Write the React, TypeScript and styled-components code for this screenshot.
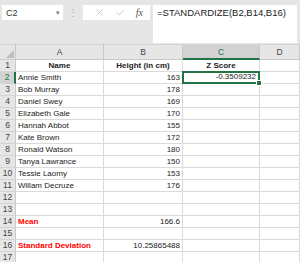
import styled, { createGlobalStyle } from 'styled-components';
import { X, Check } from 'lucide-react';

const GlobalStyle = createGlobalStyle`
  html, body {
    margin: 0;
    padding: 0;
    background: #e6e6e6;
  }
`;

type Row = { name?: string; height?: string; z?: string; red?: boolean; header?: boolean };

const rows: Row[] = [
  { name: 'Name', height: 'Height (in cm)', z: 'Z Score', header: true },
  { name: 'Annie Smith', height: '163', z: '-0.3509232' },
  { name: 'Bob Murray', height: '178' },
  { name: 'Daniel Swey', height: '169' },
  { name: 'Elizabeth Gale', height: '170' },
  { name: 'Hannah Abbot', height: '155' },
  { name: 'Kate Brown', height: '172' },
  { name: 'Ronald Watson', height: '180' },
  { name: 'Tanya Lawrance', height: '150' },
  { name: 'Tessie Laomy', height: '153' },
  { name: 'Willam Decruze', height: '176' },
  {},
  {},
  { name: 'Mean', height: '166.6', red: true },
  {},
  { name: 'Standard Deviation', height: '10.25865488', red: true },
  {},
];

const columns = ['A', 'B', 'C', 'D'];

const App = () => {
  return (
    <Page>
      <GlobalStyle />
      <FormulaBar>
        <NameBox>
          <span>C2</span>
          <Caret>▾</Caret>
        </NameBox>
        <Dots>⋮</Dots>
        <FxGroup>
          <X size={11} strokeWidth={1.2} color="#a9a9a9" />
          <Check size={11} strokeWidth={1.2} color="#a9a9a9" />
          <FxLabel>fx</FxLabel>
        </FxGroup>
        <FormulaInput>=STANDARDIZE(B2,B14,B16)</FormulaInput>
      </FormulaBar>

      <Sheet>
        <Corner>
          <CornerTriangle />
        </Corner>
        {columns.map((c) => (
          <ColumnHeader key={c} $selected={c === 'C'}>
            {c}
          </ColumnHeader>
        ))}

        {rows.map((r, i) => {
          const n = i + 1;
          return [
            <RowHeader key={`h${n}`} $selected={n === 2}>
              {n}
            </RowHeader>,
            <Cell key={`a${n}`} $align={r.header ? 'center' : 'left'} $bold={r.header || r.red} $red={r.red}>
              {r.name}
            </Cell>,
            <Cell key={`b${n}`} $align={r.header ? 'center' : 'right'} $bold={r.header}>
              {r.height}
            </Cell>,
            n === 2 ? (
              <ActiveCell key={`c${n}`}>{r.z}</ActiveCell>
            ) : (
              <Cell key={`c${n}`} $align="center" $bold={r.header}>
                {r.z}
              </Cell>
            ),
            <Cell key={`d${n}`} $align="left" />,
          ];
        })}
      </Sheet>
    </Page>
  );
};

const Page = styled.div`
  width: 300px;
  height: 262px;
  overflow: hidden;
  background: #e6e6e6;
  font-family: 'Liberation Sans', Arial, sans-serif;
`;

const FormulaBar = styled.div`
  display: flex;
  align-items: flex-start;
  height: 44px;
  padding: 5px 3px 0 2px;
  box-sizing: border-box;
`;

const NameBox = styled.div`
  width: 61px;
  height: 15px;
  background: #fff;
  display: flex;
  align-items: center;
  justify-content: space-between;
  padding: 0 3px 0 4px;
  box-sizing: border-box;
  font-size: 9px;
  color: #333;
`;

const Caret = styled.span`
  font-size: 7px;
  color: #777;
`;

const Dots = styled.div`
  width: 20px;
  height: 15px;
  display: flex;
  align-items: center;
  justify-content: center;
  color: #a8a8a8;
  font-size: 10px;
`;

const FxGroup = styled.div`
  width: 67px;
  height: 15px;
  background: #fff;
  display: flex;
  align-items: center;
  justify-content: space-around;
  padding: 0 2px 0 6px;
  box-sizing: border-box;
`;

const FxLabel = styled.span`
  font-family: 'Liberation Serif', 'Times New Roman', serif;
  font-style: italic;
  font-size: 10px;
  color: #555;
`;

const FormulaInput = styled.div`
  flex: 1;
  margin-left: 3px;
  height: 38px;
  background: #fff;
  padding: 2px 0 0 4px;
  box-sizing: border-box;
  font-size: 9.5px;
  color: #222;
`;

const Sheet = styled.div`
  display: grid;
  grid-template-columns: 16px 88px 79px 77px 40px;
  grid-template-rows: 16px;
  grid-auto-rows: 12px;
  background: #fff;
`;

const Corner = styled.div`
  position: relative;
  background: #e6e6e6;
  border-right: 1px solid #c9c9c9;
  border-bottom: 1px solid #c9c9c9;
  border-top: 1px solid #d4d4d4;
  box-sizing: border-box;
`;

const CornerTriangle = styled.div`
  position: absolute;
  right: 1px;
  bottom: 1px;
  width: 0;
  height: 0;
  border-left: 8px solid transparent;
  border-bottom: 8px solid #bdbdbd;
`;

const ColumnHeader = styled.div<{ $selected?: boolean }>`
  display: flex;
  align-items: center;
  justify-content: center;
  box-sizing: border-box;
  font-size: 8.5px;
  border-top: 1px solid #d4d4d4;
  border-right: 1px solid #c9c9c9;
  background: ${(p) => (p.$selected ? '#d2d2d2' : '#e6e6e6')};
  color: ${(p) => (p.$selected ? '#217346' : '#444')};
  border-bottom: ${(p) => (p.$selected ? '2px solid #217346' : '1px solid #c9c9c9')};
`;

const RowHeader = styled.div<{ $selected?: boolean }>`
  display: flex;
  align-items: flex-end;
  justify-content: center;
  box-sizing: border-box;
  font-size: 8.5px;
  line-height: 11px;
  border-bottom: 1px solid #d4d4d4;
  background: ${(p) => (p.$selected ? '#d2d2d2' : '#e6e6e6')};
  color: ${(p) => (p.$selected ? '#217346' : '#444')};
  border-right: ${(p) => (p.$selected ? '2px solid #217346' : '1px solid #c9c9c9')};
`;

const Cell = styled.div<{ $align: string; $bold?: boolean; $red?: boolean }>`
  display: flex;
  align-items: flex-end;
  justify-content: ${(p) => (p.$align === 'right' ? 'flex-end' : p.$align === 'center' ? 'center' : 'flex-start')};
  padding: 0 2px;
  box-sizing: border-box;
  border-right: 1px solid #dadada;
  border-bottom: 1px solid #dadada;
  font-size: 8px;
  line-height: 10px;
  white-space: nowrap;
  overflow: visible;
  font-weight: ${(p) => (p.$bold ? 700 : 400)};
  color: ${(p) => (p.$red ? '#ff0000' : '#222')};
`;

const ActiveCell = styled.div`
  position: relative;
  display: flex;
  align-items: flex-end;
  justify-content: flex-end;
  padding: 0 2px;
  margin: -1px 0 0 -1px;
  box-sizing: border-box;
  border: 2px solid #217346;
  font-size: 8px;
  line-height: 10px;
  color: #222;

  &::after {
    content: '';
    position: absolute;
    right: -4px;
    bottom: -4px;
    width: 4px;
    height: 4px;
    background: #217346;
    border: 1px solid #fff;
  }
`;

export default App;
